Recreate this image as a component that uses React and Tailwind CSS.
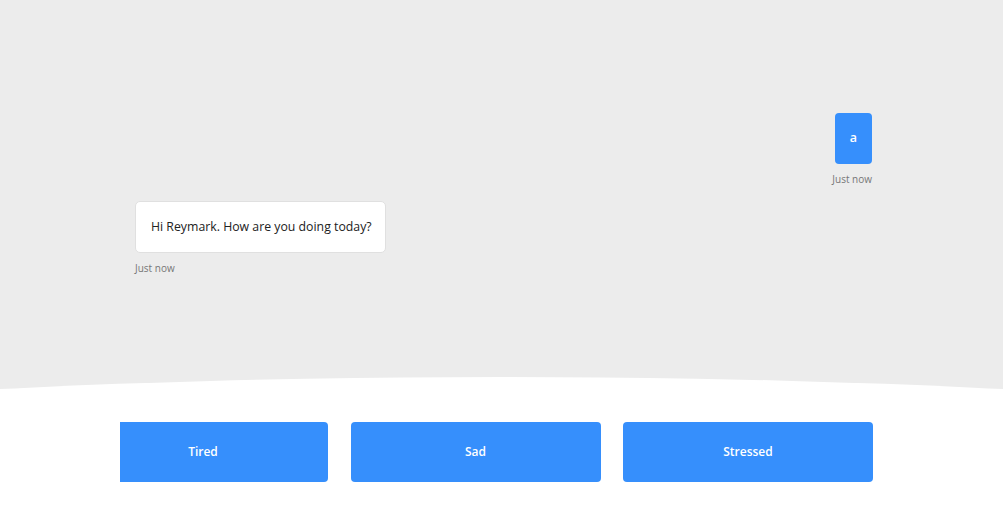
import React from "react";

export default function App() {
  const font = { fontFamily: '"Open Sans", "Noto Sans", sans-serif' };
  return (
    <div className="relative w-[1003px] h-[515px] overflow-hidden bg-[#ececec]" style={font}>
      <div className="absolute left-[-500px] top-[377px] w-[2003px] h-[180px] rounded-[50%] bg-white" />
      <div className="absolute left-0 right-0 top-[420px] bottom-0 bg-white" />
      <div className="relative flex flex-col h-full">
        <div className="flex flex-col pl-[135px] pr-[131px] pt-[113px] h-[389px]">
          <div className="flex flex-col items-end">
            <div className="w-[37px] h-[51px] rounded-[4px] bg-[#368ffc] text-white text-[12.5px] font-semibold flex items-center justify-center">
              a
            </div>
            <div className="mt-[8px] text-[10px] leading-[14px] text-[#777]">Just now</div>
          </div>
          <div className="flex flex-col items-start mt-[15px]">
            <div className="h-[52px] w-[251px] rounded-[5px] bg-white border border-[#e0e0e0] flex items-center pl-[15px] text-[12.3px] text-[#222]">
              Hi Reymark. How are you doing today?
            </div>
            <div className="mt-[8px] text-[10px] leading-[14px] text-[#777]">Just now</div>
          </div>
        </div>
        <div className="ml-[120px] w-[753px] mt-[33px] overflow-hidden">
          <div className="flex gap-[22.5px] ml-[-42px] w-max">
            {["Tired", "Sad", "Stressed"].map((t) => (
              <div
                key={t}
                className="w-[250px] h-[60px] rounded-[4px] bg-[#368ffc] text-white text-[12px] font-semibold flex items-center justify-center"
              >
                {t}
              </div>
            ))}
          </div>
        </div>
      </div>
    </div>
  );
}
